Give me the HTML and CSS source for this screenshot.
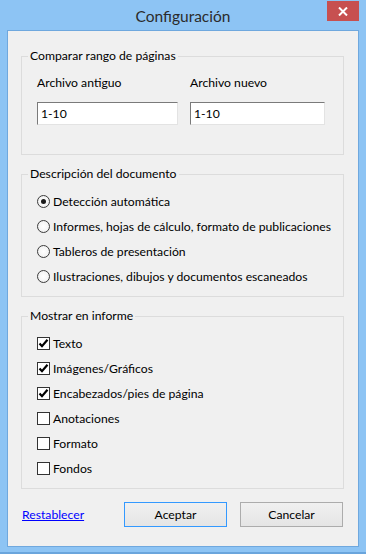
FILE: index.html
```html
<!DOCTYPE html>
<html lang="es">
  <head>
    <meta charset="UTF-8" />
    <meta name="viewport" content="width=device-width, initial-scale=1.0" />
    <title>Configuración</title>
    <link rel="stylesheet" href="styles.css">
  </head>
  <body>
    <div class="window">
      <div class="titlebar">
        <span class="title">Configuración</span>
        <button class="close" title="Cerrar">
          <svg width="10" height="9" viewBox="0 0 10 9">
            <path d="M1 0.5 L9 8.5 M9 0.5 L1 8.5" stroke="#fff" stroke-width="2" fill="none" />
          </svg>
        </button>
      </div>
      <div class="client">
        <fieldset class="group group-range">
          <legend>Comparar rango de páginas</legend>
          <div class="range-fields">
            <label class="field field-old">
              <span>Archivo antiguo</span>
              <input type="text" value="1-10" />
            </label>
            <label class="field field-new">
              <span>Archivo nuevo</span>
              <input type="text" value="1-10" />
            </label>
          </div>
        </fieldset>

        <fieldset class="group group-list">
          <legend>Descripción del documento</legend>
          <label class="option"><span class="radio checked"></span>Detección automática</label>
          <label class="option"><span class="radio"></span>Informes, hojas de cálculo, formato de publicaciones</label>
          <label class="option"><span class="radio"></span>Tableros de presentación</label>
          <label class="option"><span class="radio"></span>Ilustraciones, dibujos y documentos escaneados</label>
        </fieldset>

        <fieldset class="group group-list">
          <legend>Mostrar en informe</legend>
          <label class="option"><span class="check checked"><svg width="11" height="11" viewBox="0 0 11 11"><path d="M1.5 5.5 L4 8.2 L9.5 1.8" stroke="#000" stroke-width="2.2" fill="none" /></svg></span>Texto</label>
          <label class="option"><span class="check checked"><svg width="11" height="11" viewBox="0 0 11 11"><path d="M1.5 5.5 L4 8.2 L9.5 1.8" stroke="#000" stroke-width="2.2" fill="none" /></svg></span>Imágenes/Gráficos</label>
          <label class="option"><span class="check checked"><svg width="11" height="11" viewBox="0 0 11 11"><path d="M1.5 5.5 L4 8.2 L9.5 1.8" stroke="#000" stroke-width="2.2" fill="none" /></svg></span>Encabezados/pies de página</label>
          <label class="option"><span class="check"></span>Anotaciones</label>
          <label class="option"><span class="check"></span>Formato</label>
          <label class="option"><span class="check"></span>Fondos</label>
        </fieldset>

        <div class="actions">
          <a href="#" class="reset">Restablecer</a>
          <button class="btn btn-default">Aceptar</button>
          <button class="btn">Cancelar</button>
        </div>
      </div>
    </div>
  </body>
</html>
```

FILE: styles.css
```css
body {
  margin: 0;
  font-family: Lato, "Open Sans", sans-serif;
  font-size: 12.2px;
  color: #000;
}
.window {
  width: 366px;
  height: 554px;
  box-sizing: border-box;
  background: #8dc4f4;
  border-bottom: 2px solid #6aa5dc;
  padding: 0 7px 5px;
  display: flex;
  flex-direction: column;
}
.titlebar {
  position: relative;
  height: 30px;
  display: flex;
  align-items: center;
  justify-content: center;
}
.title {
  font-size: 15.5px;
  color: #2b2b2b;
  margin-top: 1px;
}
.close {
  position: absolute;
  top: 1px;
  right: 0;
  width: 32px;
  height: 20px;
  border: none;
  padding: 0;
  background: #c75050;
  display: flex;
  align-items: center;
  justify-content: center;
}
.client {
  flex: 1;
  background: #f0f0f0;
  border: 1px solid #6fa8de;
  display: flex;
  flex-direction: column;
}
.group {
  margin: 17px 14px 0 13px;
  padding: 0 0 0 15px;
  border: 1px solid #dcdcdc;
  min-width: 0;
}
.group + .group {
  margin-top: 11px;
}
.group legend {
  margin-left: -9px;
  padding: 0 2px;
  line-height: 16px;
}
.group-range {
  padding-top: 11px;
  padding-bottom: 29px;
}
.range-fields {
  display: flex;
  gap: 12px;
}
.field {
  display: flex;
  flex-direction: column;
  gap: 11px;
  line-height: 16px;
}
.field input {
  box-sizing: border-box;
  height: 23px;
  margin: 0;
  padding: 0 3px;
  font: inherit;
  color: #000;
  background: #fff;
  border: 1px solid;
  border-color: #7a7a7a #e3e3e3 #e3e3e3 #7a7a7a;
  outline: none;
}
.field-old input {
  width: 141px;
}
.field-new input {
  width: 135px;
}
.group-list {
  padding-top: 7px;
  padding-bottom: 7px;
}
.option {
  height: 25px;
  display: flex;
  align-items: center;
  gap: 3px;
}
.radio {
  width: 13px;
  height: 13px;
  box-sizing: border-box;
  border: 1px solid #3c3c3c;
  border-radius: 50%;
  background: radial-gradient(circle, #fff 0%, #f4f4f4 60%, #dcdcdc 100%);
  display: flex;
  align-items: center;
  justify-content: center;
}
.radio.checked::after {
  content: "";
  width: 5px;
  height: 5px;
  border-radius: 50%;
  background: #1a1a1a;
}
.check {
  width: 13px;
  height: 13px;
  box-sizing: border-box;
  border: 1px solid #333;
  background: #fff;
  display: flex;
  align-items: center;
  justify-content: center;
}
.actions {
  display: flex;
  align-items: center;
  gap: 13px;
  margin-top: 13px;
  padding: 0 15px 0 14px;
}
.reset {
  color: #0000ff;
  text-decoration: underline;
  margin-right: auto;
}
.btn {
  width: 103px;
  height: 25px;
  margin: 0;
  padding: 0;
  font: inherit;
  color: #000;
  background: linear-gradient(#f0f0f0, #e5e5e5);
  border: 1px solid #acacac;
}
.btn-default {
  border-color: #3399ff;
}
```
